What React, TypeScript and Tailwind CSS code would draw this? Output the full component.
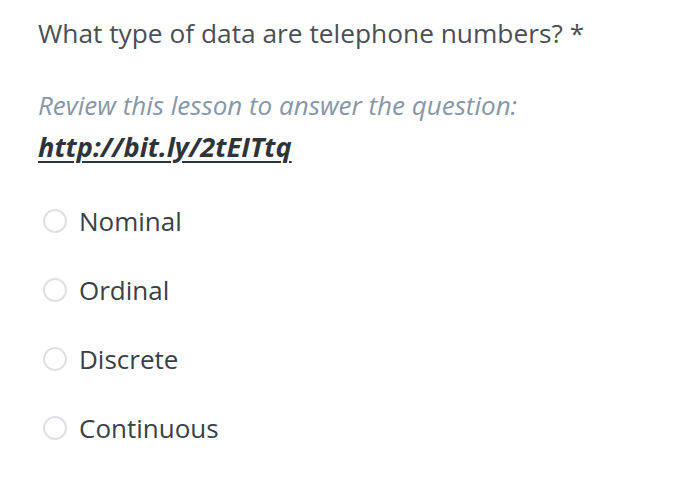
import React from "react";

const options = ["Nominal", "Ordinal", "Discrete", "Continuous"];

export default function App() {
  return (
    <div className="w-[700px] h-[485px] bg-white pl-[38px] pt-[14px]" style={{ fontFamily: '"Open Sans", sans-serif' }}>
      <h1 className="text-[26.3px] leading-[38px] text-[#4a4f57] font-normal">
        What type of data are telephone numbers? <span>*</span>
      </h1>
      <p className="mt-[33px] text-[26px] leading-[40px] italic text-[#8796a8]">
        Review this lesson to answer the question:
      </p>
      <p className="mt-[2px] text-[27.2px] leading-[40px] italic font-bold text-[#2f333a] underline decoration-[2px] underline-offset-[4px]">
        http://bit.ly/2tEITtq
      </p>
      <div className="mt-[34px] flex flex-col gap-[29px]">
        {options.map((o) => (
          <div key={o} className="flex items-center h-[40px]">
            <span className="ml-[5px] w-[24px] h-[24px] rounded-full border-[2px] border-[#dfe0e3]" />
            <span className="ml-[12px] text-[26px] text-[#3b3f46]">{o}</span>
          </div>
        ))}
      </div>
    </div>
  );
}
